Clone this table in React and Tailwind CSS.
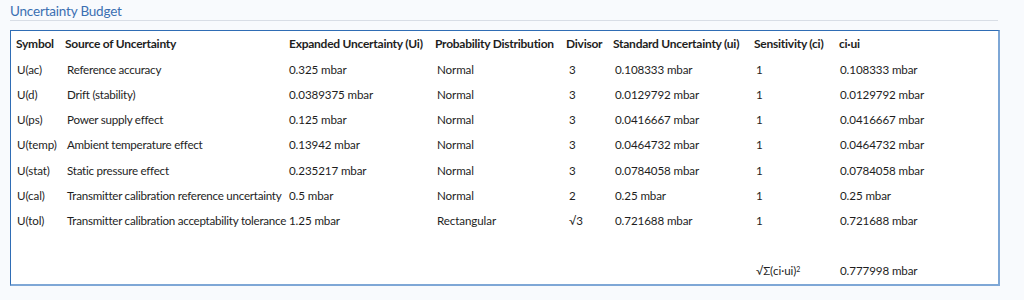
import React from 'react';

const rows = [
  { sym: 'U(ac)', src: 'Reference accuracy', exp: '0.325 mbar', dist: 'Normal', div: '3', std: '0.108333 mbar', sens: '1', ciui: '0.108333 mbar' },
  { sym: 'U(d)', src: 'Drift (stability)', exp: '0.0389375 mbar', dist: 'Normal', div: '3', std: '0.0129792 mbar', sens: '1', ciui: '0.0129792 mbar' },
  { sym: 'U(ps)', src: 'Power supply effect', exp: '0.125 mbar', dist: 'Normal', div: '3', std: '0.0416667 mbar', sens: '1', ciui: '0.0416667 mbar' },
  { sym: 'U(temp)', src: 'Ambient temperature effect', exp: '0.13942 mbar', dist: 'Normal', div: '3', std: '0.0464732 mbar', sens: '1', ciui: '0.0464732 mbar' },
  { sym: 'U(stat)', src: 'Static pressure effect', exp: '0.235217 mbar', dist: 'Normal', div: '3', std: '0.0784058 mbar', sens: '1', ciui: '0.0784058 mbar' },
  { sym: 'U(cal)', src: 'Transmitter calibration reference uncertainty', exp: '0.5 mbar', dist: 'Normal', div: '2', std: '0.25 mbar', sens: '1', ciui: '0.25 mbar' },
  { sym: 'U(tol)', src: 'Transmitter calibration acceptability tolerance', exp: '1.25 mbar', dist: 'Rectangular', div: '√3', std: '0.721688 mbar', sens: '1', ciui: '0.721688 mbar' }
];

const cols = 'grid grid-cols-[49px_224px_146px_131px_47px_141px_85px_1fr] whitespace-nowrap';

export default function App() {
  return (
    <main className="h-[300px] bg-[#f8fafd] px-[10px] pt-[3px] text-[#1e1e1e]" style={{ fontFamily: 'Lato, "Noto Sans", sans-serif' }}>
      {/* Group header */}
      <h1 className="text-[13.5px] leading-[17px] tracking-[-0.2px] text-[#3b6fb2] mr-[16px]">Uncertainty Budget</h1>
      <div className="h-px bg-[#d9dee6] mr-[16px]" />

      {/* Budget table */}
      <div className="mt-[9px] mr-[14px] h-[256px] border-t border-l border-[#2f6db5] border-r-2 border-b-2 border-r-[#7ea7d6] border-b-[#7ea7d6] bg-white pl-[5px] pt-[4px] text-[11.6px] tracking-[-0.1px]">
        <div className={`${cols} h-[18px] items-center text-[12px] font-bold tracking-[-0.25px]`}>
          <div>Symbol</div>
          <div>Source of Uncertainty</div>
          <div>Expanded Uncertainty (Ui)</div>
          <div>Probability Distribution</div>
          <div>Divisor</div>
          <div>Standard Uncertainty (ui)</div>
          <div>Sensitivity (ci)</div>
          <div>ci·ui</div>
        </div>

        <div className="mt-[4px]">
          {rows.map((r, i) => (
            <div key={i} className={`${cols} h-[25.2px] items-center`}>
              <div className="pl-[1px]">{r.sym}</div>
              <div className="pl-[2px] tracking-[-0.25px]">{r.src}</div>
              <div>{r.exp}</div>
              <div className="pl-[2px]">{r.dist}</div>
              <div className="pl-[3px]">{r.div}</div>
              <div className="pl-[2px]">{r.std}</div>
              <div className="pl-[2px]">{r.sens}</div>
              <div className="pl-[1px]">{r.ciui}</div>
            </div>
          ))}
          <div className="h-[25px]" />
          <div className={`${cols} h-[25px] items-center`}>
            <div />
            <div />
            <div />
            <div />
            <div />
            <div />
            <div className="pl-[2px]">√Σ(ci·ui)<sup className="text-[7px]">2</sup></div>
            <div className="pl-[1px]">0.777998 mbar</div>
          </div>
        </div>
      </div>
    </main>
  );
}
